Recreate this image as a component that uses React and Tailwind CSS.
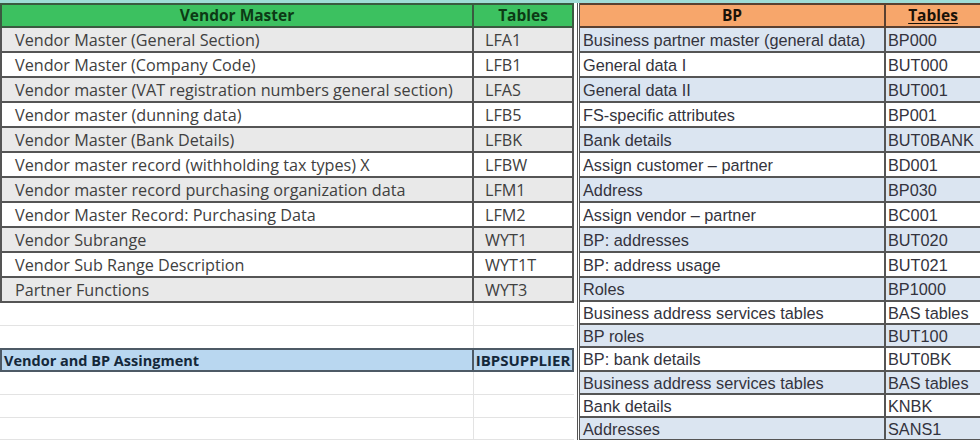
import React from "react";

const leftRows = [
  ["Vendor Master (General Section)", "LFA1"],
  ["Vendor Master (Company Code)", "LFB1"],
  ["Vendor master (VAT registration numbers general section)", "LFAS"],
  ["Vendor master (dunning data)", "LFB5"],
  ["Vendor Master (Bank Details)", "LFBK"],
  ["Vendor master record (withholding tax types) X", "LFBW"],
  ["Vendor master record purchasing organization data", "LFM1"],
  ["Vendor Master Record: Purchasing Data", "LFM2"],
  ["Vendor Subrange", "WYT1"],
  ["Vendor Sub Range Description", "WYT1T"],
  ["Partner Functions", "WYT3"],
];

const rightRows = [
  ["Business partner master (general data)", "BP000"],
  ["General data I", "BUT000"],
  ["General data II", "BUT001"],
  ["FS-specific attributes", "BP001"],
  ["Bank details", "BUT0BANK"],
  ["Assign customer \u2013 partner", "BD001"],
  ["Address", "BP030"],
  ["Assign vendor \u2013 partner", "BC001"],
  ["BP: addresses", "BUT020"],
  ["BP: address usage", "BUT021"],
  ["Roles", "BP1000"],
  ["Business address services tables", "BAS tables"],
  ["BP roles", "BUT100"],
  ["BP: bank details", "BUT0BK"],
  ["Business address services tables", "BAS tables"],
  ["Bank details", "KNBK"],
  ["Addresses", "SANS1"],
];

const rightHeights = [25, 25, 25, 25, 25, 25, 25, 25, 25, 25, 24, 23, 23, 24, 23, 23, 23];

export default function App() {
  return (
    <div className="w-[980px] h-[440px] bg-white overflow-hidden flex flex-col">
      <div className="h-[3px] bg-[#9fdcd6] shrink-0" />
      <div className="flex flex-1">
        {/* Left table */}
        <div className="w-[574px] shrink-0 flex flex-col font-['Open_Sans',sans-serif] text-[16.2px] text-[#404040]">
          <div className="flex h-[25px] bg-[#3cc160] border-y-2 border-l-2 border-[#3a5a40] text-[15.5px]">
            <div className="w-[472px] flex items-center justify-center pt-[1px] font-bold text-[#0c3a15] border-r-2 border-[#3a5a40]">
              Vendor Master
            </div>
            <div className="flex-1 flex items-center justify-center pt-[1px] font-bold text-[#0c3a15] border-r-2 border-[#3a5a40]">
              Tables
            </div>
          </div>
          {leftRows.map(([a, b], i) => (
            <div
              key={i}
              className={`flex h-[25px] border-b-2 border-l-2 border-[#555555] ${i % 2 === 0 ? "bg-[#e9e9e9]" : "bg-white"}`}
            >
              <div className="w-[472px] flex items-center pl-[13px] pt-[2px] border-r-2 border-[#555555] whitespace-nowrap">{a}</div>
              <div className="flex-1 flex items-center pl-[11px] pt-[2px] border-r-2 border-[#555555]">{b}</div>
            </div>
          ))}
          <div className="flex h-[23px] border-b border-[#e3e3e3]">
            <div className="w-[474px] border-r border-[#e3e3e3]" />
            <div className="flex-1" />
          </div>
          <div className="flex h-[22px]">
            <div className="w-[474px] border-r border-[#e3e3e3]" />
            <div className="flex-1" />
          </div>
          <div className="flex h-[24px] bg-[#b9d7f0] border-2 border-[#4d5a66]">
            <div className="w-[472px] flex items-center pl-[2px] pt-[1px] font-bold text-[14.5px] text-[#14283a] border-r-2 border-[#4d5a66]">
              Vendor and BP Assingment
            </div>
            <div className="flex-1 flex items-center justify-center pt-[1px] font-bold text-[15px] text-[#14283a]">
              IBPSUPPLIER
            </div>
          </div>
          {[23, 23, 22].map((h, i) => (
            <div key={i} className="flex border-b border-[#e3e3e3]" style={{ height: h }}>
              <div className="w-[474px] border-r border-[#e3e3e3]" />
              <div className="flex-1" />
            </div>
          ))}
        </div>

        {/* Right table */}
        <div className="ml-[3px] flex-1 flex flex-col border-l-[3px] border-double border-[#555555] font-['Liberation_Sans',Arial,sans-serif] text-[16.3px] text-[#33333d]">
          <div className="flex h-[25px] bg-[#f7a66b] border-y-2 border-[#5a4030]">
            <div className="w-[306px] flex items-center justify-center pt-[1px] font-bold text-[#1a1208] border-r-2 border-[#5a4030] font-['Open_Sans',sans-serif] text-[15.5px]">
              BP
            </div>
            <div className="flex-1 flex items-center justify-center pt-[1px] font-bold text-[#1a1208] underline underline-offset-2 font-['Open_Sans',sans-serif] text-[15.5px]">
              Tables
            </div>
          </div>
          {rightRows.map(([a, b], i) => (
            <div
              key={i}
              className={`flex border-b-2 border-[#555555] ${i % 2 === 0 ? "bg-[#dbe5f1]" : "bg-white"}`}
              style={{ height: rightHeights[i] }}
            >
              <div className="w-[306px] flex items-center pl-[3px] pt-[1px] border-r-2 border-[#555555] whitespace-nowrap">{a}</div>
              <div className="flex-1 flex items-center pl-[2px] pt-[1px] whitespace-nowrap">{b}</div>
            </div>
          ))}
        </div>
      </div>
    </div>
  );
}
